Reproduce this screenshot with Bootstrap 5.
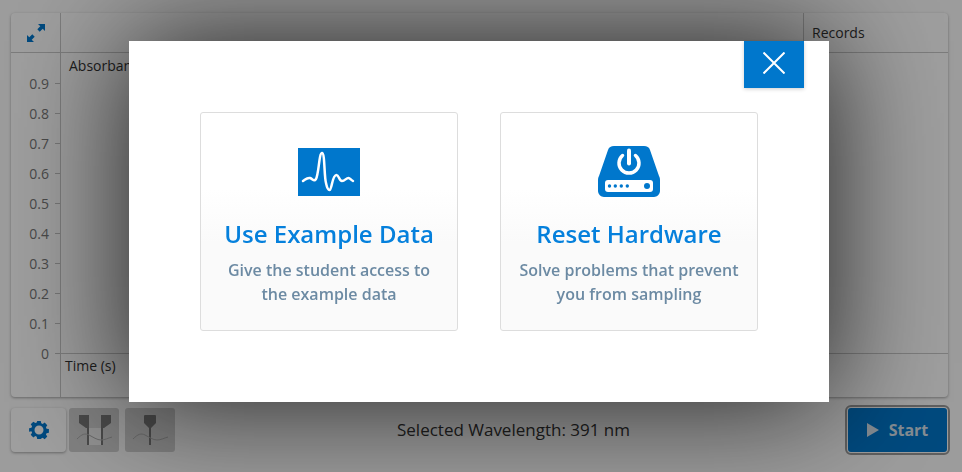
<!DOCTYPE html>
<html lang="en">
<head>
    <meta charset="UTF-8">
    <meta name="viewport" content="width=device-width, initial-scale=1.0">
    <title>Spectrometer</title>
    <link href="https://cdn.jsdelivr.net/npm/bootstrap@5.3.0/dist/css/bootstrap.min.css" rel="stylesheet">
    <script src="https://cdn.jsdelivr.net/npm/bootstrap@5.3.0/dist/js/bootstrap.bundle.min.js"></script>
    <style>
        html, body { height: 472px; overflow: hidden; }
        body {
            background-color: #fcfcfc;
            font-family: "Open Sans", "Noto Sans", sans-serif;
            color: #333;
            font-size: 14px;
        }
        .app-shell { padding: 13px 14px 0 11px; }
        .graph-panel {
            height: 384px;
            background: #fff;
            border-radius: 4px;
            box-shadow: 0 1px 3px rgba(0, 0, 0, .35);
        }
        .head-row { height: 40px; border-bottom: 1px solid #c8c8c8; }
        .corner-cell { width: 50px; border-right: 1px solid #c8c8c8; }
        .head-fill { border-right: 1px solid #c8c8c8; width: 743px; }
        .records-title { padding-left: 8px; line-height: 40px; }
        .body-row { height: 344px; }
        .y-axis { width: 50px; border-right: 1px solid #c8c8c8; padding-top: 15px; }
        .y-tick {
            height: 30px;
            line-height: 32px;
            padding-right: 11px;
            text-align: right;
            color: #777;
            position: relative;
        }
        .y-tick::after {
            content: "";
            position: absolute;
            right: 0;
            top: 15px;
            width: 5px;
            height: 1px;
            background: #c0c0c0;
        }
        .plot-col { width: 743px; }
        .records-col { flex: 1; }
        .plot-area { height: 301px; border-bottom: 1px solid #c8c8c8; padding: 2px 0 0 8px; }
        .x-label { padding: 1px 0 0 4px; }
        .x-label small { font-size: 14px; }
        .tool-row { height: 44px; margin-top: 11px; }
        .gear-btn {
            width: 55px;
            background: #fff;
            border-radius: 4px;
            box-shadow: 0 1px 3px rgba(0, 0, 0, .35);
        }
        .probe-btn { width: 50px; margin-left: 3px; background: #d0d0d0; border-radius: 3px; }
        .probe-btn + .probe-btn { margin-left: 6px; }
        .wave-text { font-size: 17px; color: #333; padding-left: 7px; }
        .start-wrap { border: 2px solid #999; border-radius: 6px; padding: 1px; margin: -3px -2px -3px 0; }
        .start-btn {
            width: 99px;
            height: 44px;
            background: #0077cc;
            color: #d6e2ec;
            border: 0;
            border-radius: 3px;
            font-size: 16px;
            font-weight: 700;
            gap: 10px;
        }
        .dim-layer {
            position: fixed;
            inset: 0;
            background: rgba(0, 0, 0, .38);
        }
        .choice-modal {
            position: fixed;
            left: 129px;
            top: 41px;
            width: 700px;
            height: 361px;
            background: #fff;
            padding: 71px 71px 0;
            box-shadow: 0 0 110px rgba(0, 0, 0, .8);
        }
        .close-box {
            position: absolute;
            top: 0;
            right: 25px;
            width: 60px;
            height: 47px;
            background: #0077cc;
            border: 0;
            padding: 0 0 3px;
            box-shadow: 0 1px 4px rgba(0, 0, 0, .2);
        }
        .choice-grid { gap: 42px; }
        .choice-card {
            width: 258px;
            height: 219px;
            border: 1px solid #ddd;
            border-radius: 3px;
            background: linear-gradient(#fff 35%, #fafafa 60%);
            text-align: center;
        }
        .choice-icon { height: 96px; padding-top: 35px; }
        .disk-icon { margin-top: -2px; }
        .choice-title { color: #0580dc; font-size: 24px; font-weight: 600; line-height: 32px; margin: 9px 0 8px; }
        .choice-text { color: #6c8aa3; font-size: 16px; font-weight: 600; line-height: 24px; }
    </style>
</head>
<body>

<div class="app-shell">
    <!-- Graph panel behind the dialog -->
    <div class="graph-panel">
        <div class="head-row d-flex">
            <div class="corner-cell d-flex align-items-center justify-content-center">
                <svg width="18" height="18" viewBox="0 0 18 18" fill="#0077cc">
                    <path d="M11 0h7v7l-2.300-2.300-3 3-2.400-2.400 3-3zM7 18H0v-7l2.300 2.300 3-3 2.400 2.400-3 3z"/>
                </svg>
            </div>
            <div class="head-fill"></div>
            <div class="records-title">Records</div>
        </div>
        <div class="body-row d-flex">
            <div class="y-axis">
                <div class="y-tick">0.9</div>
                <div class="y-tick">0.8</div>
                <div class="y-tick">0.7</div>
                <div class="y-tick">0.6</div>
                <div class="y-tick">0.5</div>
                <div class="y-tick">0.4</div>
                <div class="y-tick">0.3</div>
                <div class="y-tick">0.2</div>
                <div class="y-tick">0.1</div>
                <div class="y-tick">0</div>
            </div>
            <div class="plot-col">
                <div class="plot-area">Absorbance</div>
                <div class="x-label">Time <small>(s)</small></div>
            </div>
            <div class="records-col">
                <div class="plot-area"></div>
            </div>
        </div>
    </div>

    <!-- Bottom toolbar -->
    <div class="tool-row d-flex align-items-stretch">
        <div class="gear-btn d-flex align-items-center justify-content-center">
            <svg width="20" height="20" viewBox="0 0 20 20">
                <path fill="#0077cc" fill-rule="evenodd" d="M8 0h4l.5 2.600 1.600.7 2.200-1.500 2.900 2.900-1.500 2.200.7 1.600 2.600.5v4l-2.600.5-.7 1.600 1.500 2.200-2.900 2.900-2.200-1.500-1.600.7L12 20H8l-.5-2.600-1.600-.7-2.200 1.500-2.900-2.900 1.500-2.200-.7-1.600L-1 12V8l2.600-.5.7-1.600-1.500-2.200 2.900-2.900 2.200 1.500 1.600-.7zM10 5a5 5 0 1 0 0 10 5 5 0 0 0 0-10z" transform="translate(1 1) scale(.9)"/>
            </svg>
        </div>
        <div class="probe-btn">
            <svg class="d-block" width="50" height="44" viewBox="0 0 50 44">
                <rect x="20" y="20" width="12" height="17" fill="#eaeaea"/>
                <path d="M10 7h10v30h-2V20h-1l-7-5zM42 7H32v30h2V20h1l7-5z" fill="#777"/>
                <path d="M8 31c5-5 8-6 12-4s8 5 12 5 7-2 11-3" fill="none" stroke="#aaa" stroke-width="1"/>
            </svg>
        </div>
        <div class="probe-btn">
            <svg class="d-block" width="50" height="44" viewBox="0 0 50 44">
                <path d="M20 7h10c1 0 1 1 1 1v7l-5 5v17h-2V20l-5-5V8s0-1 1-1z" fill="#777"/>
                <path d="M8 31c5-5 8-6 12-4s8 5 12 5 7-2 11-3" fill="none" stroke="#aaa" stroke-width="1"/>
            </svg>
        </div>
        <div class="flex-grow-1 d-flex align-items-center justify-content-center wave-text">Selected Wavelength: 391 nm</div>
        <div class="start-wrap">
            <button type="button" class="start-btn d-flex align-items-center justify-content-center">
                <svg width="12" height="14" viewBox="0 0 12 14" fill="#d6e2ec"><path d="M0 0l12 7-12 7z"/></svg>
                Start
            </button>
        </div>
    </div>
</div>

<div class="dim-layer"></div>

<!-- Dialog -->
<div class="choice-modal">
    <button type="button" class="close-box d-flex align-items-center justify-content-center" aria-label="Close">
        <svg width="22" height="22" viewBox="0 0 22 22" stroke="#fff" stroke-width="2"><path d="M.5.5l21 21M21.500.5l-21 21"/></svg>
    </button>
    <div class="choice-grid d-flex">
        <div class="choice-card">
            <div class="choice-icon">
                <svg width="62" height="48" viewBox="0 0 62 48">
                    <rect width="62" height="48" fill="#0077cc"/>
                    <path d="M5 33C8 31 9 29.500 12 30C15 31 16 34 18 31C21 25 21 5 24 5C27 5 26 28 28 35C29 40 30 42 31.500 42C34 42 34 27 38.500 27C41 27 41 33 44 33C47 33 48 30 50.500 30C52 30 53 32 55 33" fill="none" stroke="#fff" stroke-width="2.500" stroke-linecap="round"/>
                </svg>
            </div>
            <div class="choice-title">Use Example Data</div>
            <div class="choice-text">Give the student access to<br>the example data</div>
        </div>
        <div class="choice-card">
            <div class="choice-icon">
                <svg class="disk-icon" width="62" height="51" viewBox="0 0 62 51">
                    <path d="M16 0h30c3 0 5 1 6 4l9 26c1 2 1 3 1 5v10c0 3-3 6-6 6H6c-3 0-6-3-6-6V35c0-2 0-3 1-5l9-26c1-3 3-4 6-4z" fill="#0077cc"/>
                    <rect x="7" y="34" width="48" height="12" rx="3" fill="#fff"/>
                    <circle cx="11.500" cy="40" r="1.700" fill="#0077cc"/>
                    <circle cx="17.300" cy="40" r="1.700" fill="#0077cc"/>
                    <circle cx="23.300" cy="40" r="1.700" fill="#0077cc"/>
                    <circle cx="29.300" cy="40" r="1.700" fill="#0077cc"/>
                    <circle cx="49" cy="40" r="3" fill="#0077cc"/>
                    <path d="M24.500 9.500a10 10 0 1 0 13 0" fill="none" stroke="#fff" stroke-width="3.500" stroke-linecap="round"/>
                    <path d="M31 4.500v13" stroke="#fff" stroke-width="4" stroke-linecap="round"/>
                </svg>
            </div>
            <div class="choice-title">Reset Hardware</div>
            <div class="choice-text">Solve problems that prevent<br>you from sampling</div>
        </div>
    </div>
</div>

</body>
</html>
